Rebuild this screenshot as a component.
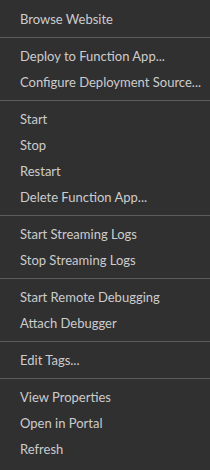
const groups = [
  ['Browse Website'],
  ['Deploy to Function App...', 'Configure Deployment Source...'],
  ['Start', 'Stop', 'Restart', 'Delete Function App...'],
  ['Start Streaming Logs', 'Stop Streaming Logs'],
  ['Start Remote Debugging', 'Attach Debugger'],
  ['Edit Tags...'],
  ['View Properties', 'Open in Portal', 'Refresh'],
];

export default function App() {
  return (
    <div className="bg-[#303031] text-[#cccccc] h-[470px] w-[210px] pt-[6px] font-['Lato',sans-serif] text-[13px] overflow-hidden">
      {groups.map((g, gi) => (
        <div key={gi}>
          {gi > 0 && <div className="my-[5px] h-px bg-[#5c5c5c]" />}
          {g.map((item) => (
            <div key={item} className="h-[26px] leading-[26px] pl-[20px] whitespace-nowrap">
              {item}
            </div>
          ))}
        </div>
      ))}
    </div>
  );
}
